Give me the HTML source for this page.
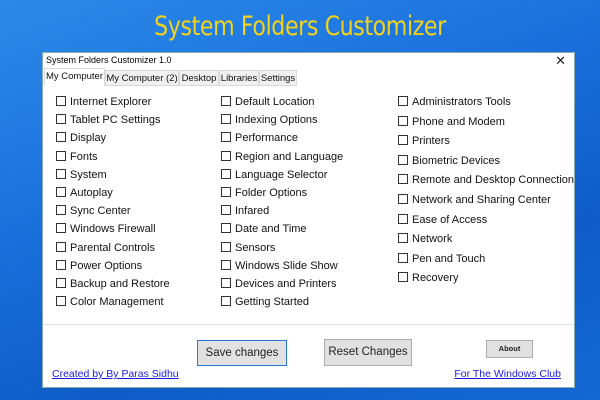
<!DOCTYPE html>
<html><head><style>
body{margin:0;width:600px;height:400px;overflow:hidden;position:relative;font-family:"Liberation Sans",sans-serif;
background:linear-gradient(160deg,#2a8ae8 0%,#1a6fdc 40%,#0f5cc8 70%,#1468d4 100%);}
.t{position:absolute;left:0;width:600px;top:11px;text-align:center;color:#f2d21a;font-size:27px;font-family:"DejaVu Sans",sans-serif;letter-spacing:-0.5px;transform:scaleX(0.82)}
.w{position:absolute;left:42px;top:52px;width:533px;height:336px;background:#fff;border:1px solid #8aa;box-sizing:border-box}
.tt{position:absolute;left:3px;top:2px;font-size:9px;color:#000}
.x{position:absolute;right:8px;top:0;font-size:13px;color:#222}
.tab{position:absolute;top:17px;height:16px;font-size:9.5px;line-height:16px;background:#f0f0f0;border:1px solid #d9d9d9;box-sizing:border-box;text-align:center;color:#111;white-space:nowrap;overflow:hidden}
.cb{position:absolute;font-size:11px;color:#111;white-space:nowrap;line-height:14px}
.cb:before{content:"";display:inline-block;width:8px;height:8px;border:1px solid #333;margin-right:4px;vertical-align:-1px}
.btn{position:absolute;background:#e1e1e1;border:1px solid #adadad;box-sizing:border-box;text-align:center;font-size:11.5px;color:#222}
.lk{position:absolute;top:315px;font-size:10.5px;color:#1a1adc;text-decoration:underline}
</style></head><body>
<div class="t">System Folders Customizer</div>
<div class="w">
<div class="tt">System Folders Customizer 1.0</div><div class="x">✕</div>
<div class="tab" style="left:1px;width:61px;background:#fff;border-bottom:none;top:15px;height:18px;line-height:15px">My Computer</div>
<div class="tab" style="left:62px;width:74px">My Computer (2)</div>
<div class="tab" style="left:136px;width:40px">Desktop</div>
<div class="tab" style="left:176px;width:40px">Libraries</div>
<div class="tab" style="left:216px;width:38px">Settings</div>
<div style="position:absolute;left:0;right:0;top:271px;border-top:1px solid #e0e0e0"></div>
<div class="btn" style="left:154px;top:287px;width:90px;height:26px;line-height:24px;border:1px solid #2a78d6">Save changes</div>
<div class="btn" style="left:281px;top:286px;width:88px;height:27px;line-height:25px">Reset Changes</div>
<div class="btn" style="left:443px;top:287px;width:47px;height:18px;line-height:16px;font-size:7.5px;font-weight:bold">About</div>
<div class="lk" style="left:9px">Created by By Paras Sidhu</div>
<div class="lk" style="right:13px">For The Windows Club</div>
</div>
<div id="c"></div>
<script>
var c1=["Internet Explorer","Tablet PC Settings","Display","Fonts","System","Autoplay","Sync Center","Windows Firewall","Parental Controls","Power Options","Backup and Restore","Color Management"];
var c2=["Default Location","Indexing Options","Performance","Region and Language","Language Selector","Folder Options","Infared","Date and Time","Sensors","Windows Slide Show","Devices and Printers","Getting Started"];
var c3=["Administrators Tools","Phone and Modem","Printers","Biometric Devices","Remote and Desktop Connection","Network and Sharing Center","Ease of Access","Network","Pen and Touch","Recovery"];
var h="";
c1.forEach(function(s,i){h+='<div class="cb" style="left:56px;top:'+(95+i*18.2)+'px">'+s+'</div>'});
c2.forEach(function(s,i){h+='<div class="cb" style="left:221px;top:'+(95+i*18.2)+'px">'+s+'</div>'});
c3.forEach(function(s,i){h+='<div class="cb" style="left:398px;top:'+(95+i*19.6)+'px">'+s+'</div>'});
document.getElementById("c").innerHTML=h;
</script>
</body></html>
